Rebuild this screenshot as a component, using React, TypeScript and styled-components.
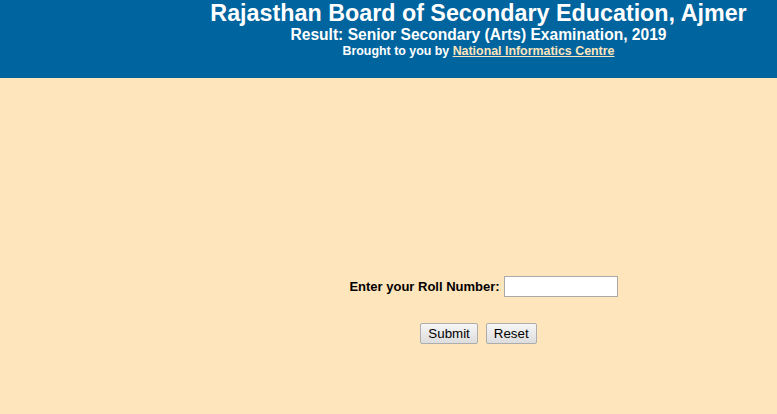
import React, { useState } from "react";
import styled, { createGlobalStyle } from "styled-components";

const GlobalStyle = createGlobalStyle`
  html, body {
    margin: 0;
    padding: 0;
    background-color: #ffe5bc;
    overflow: hidden;
  }
  body {
    font-family: "Liberation Sans", Arial, sans-serif;
  }
`;

const StyledPage = styled.div`
  width: 100%;
  min-height: 414px;
  display: flex;
  flex-direction: column;
`;

const StyledHeader = styled.header`
  background-color: #00649e;
  color: #ffffff;
  height: 78px;
  display: flex;
  flex-direction: column;
  align-items: center;
  padding-left: 180px;
  box-sizing: border-box;
  white-space: nowrap;
`;

const StyledTitle = styled.h1`
  margin: 0;
  font-size: 23.3px;
  line-height: 26px;
  font-weight: bold;
`;

const StyledSubTitle = styled.h2`
  margin: 0;
  font-size: 15.6px;
  line-height: 18px;
  font-weight: bold;
`;

const StyledByline = styled.p`
  margin: 0;
  font-size: 12.4px;
  line-height: 15px;
  font-weight: bold;

  a {
    color: #ffe5bc;
    text-decoration: underline;
  }
`;

const StyledForm = styled.form`
  display: flex;
  flex-direction: column;
  align-items: center;
  gap: 26px;
  padding-top: 198px;
  padding-left: 180px;
`;

const StyledRow = styled.div`
  display: flex;
  align-items: center;
  gap: 4px;
  padding-left: 10px;
`;

const StyledLabel = styled.label`
  font-size: 13px;
  font-weight: bold;
  color: #000000;
`;

const StyledInput = styled.input`
  width: 114px;
  height: 21px;
  box-sizing: border-box;
  border: 1px solid #a9a9a9;
  background: #ffffff;
  padding: 1px 2px;
  font-size: 13px;
  font-family: "Liberation Sans", Arial, sans-serif;
`;

const StyledButtons = styled.div`
  display: flex;
  gap: 8px;
`;

const StyledButton = styled.button`
  height: 21px;
  padding: 0 7px;
  font-size: 13.33px;
  font-family: "Liberation Sans", Arial, sans-serif;
  color: #000000;
  border: 1px solid #adadad;
  border-radius: 2px;
  background: linear-gradient(#f6f6f6, #dddddd);
  cursor: pointer;
`;

const App = () => {
  const [rollNo, setRollNo] = useState("");
  return (
    <StyledPage>
      <GlobalStyle />
      <StyledHeader>
        <StyledTitle>Rajasthan Board of Secondary Education, Ajmer</StyledTitle>
        <StyledSubTitle>
          Result: Senior Secondary (Arts) Examination, 2019
        </StyledSubTitle>
        <StyledByline>
          Brought to you by <a href="#">National Informatics Centre</a>
        </StyledByline>
      </StyledHeader>
      <StyledForm
        onSubmit={(e) => e.preventDefault()}
        onReset={() => setRollNo("")}
      >
        <StyledRow>
          <StyledLabel htmlFor="roll">Enter your Roll Number:</StyledLabel>
          <StyledInput
            id="roll"
            type="text"
            value={rollNo}
            onChange={(e) => setRollNo(e.target.value)}
          />
        </StyledRow>
        <StyledButtons>
          <StyledButton type="submit">Submit</StyledButton>
          <StyledButton type="reset">Reset</StyledButton>
        </StyledButtons>
      </StyledForm>
    </StyledPage>
  );
};

export default App;
